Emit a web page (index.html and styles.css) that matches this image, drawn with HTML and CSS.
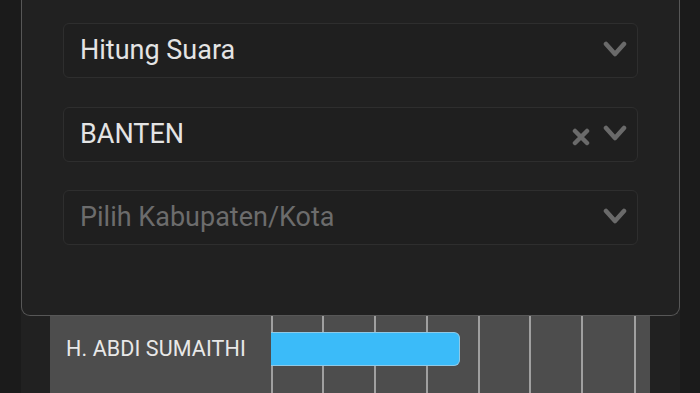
FILE: index.html
```html
<!DOCTYPE html>
<html>
<head>
<meta charset="utf-8">
<link rel="stylesheet" href="styles.css">
</head>
<body>
<div class="page">
  <div class="column">
    <div class="panel">
      <div class="select">
        <span class="value">Hitung Suara</span>
        <span class="icons">
          <svg class="chev" viewBox="0 0 24 17"><path d="M3 3 L12 13 L21 3"/></svg>
        </span>
      </div>
      <div class="select">
        <span class="value">BANTEN</span>
        <span class="icons">
          <svg class="clear" viewBox="0 0 18 18"><path d="M3 3 L15 15 M15 3 L3 15"/></svg>
          <svg class="chev" viewBox="0 0 24 17"><path d="M3 3 L12 13 L21 3"/></svg>
        </span>
      </div>
      <div class="select">
        <span class="value placeholder">Pilih Kabupaten/Kota</span>
        <span class="icons">
          <svg class="chev" viewBox="0 0 24 17"><path d="M3 3 L12 13 L21 3"/></svg>
        </span>
      </div>
    </div>
    <div class="chart">
      <div class="row">
        <div class="label">H. ABDI SUMAITHI</div>
        <div class="plot">
          <div class="grid">
            <span></span><span></span><span></span><span></span><span></span><span></span><span></span><span></span>
          </div>
          <div class="bar" style="width:189px"></div>
        </div>
      </div>
    </div>
  </div>
</div>
</body>
</html>
```

FILE: styles.css
```css
* { box-sizing: border-box; }
html, body {
  margin: 0;
  padding: 0;
  width: 700px;
  height: 393px;
  overflow: hidden;
  background: #1b1b1b;
  font-family: Roboto, "Liberation Sans", sans-serif;
}
.page {
  padding-left: 21px;
  width: 700px;
  height: 393px;
}
.column {
  width: 659px;
  height: 393px;
  background: #212121;
  position: relative;
}
.panel {
  position: relative;
  z-index: 2;
  height: 316px;
  background: #212121;
  border: 1px solid #575757;
  border-top: none;
  border-radius: 0 0 9px 9px;
  padding: 23px 41px 0 41px;
  display: flex;
  flex-direction: column;
  gap: 29px;
}
.select {
  height: 55px;
  border: 1px solid #2e2e2e;
  border-radius: 6px;
  background: #1f1f1f;
  display: flex;
  align-items: center;
  justify-content: space-between;
  padding: 0 10px 0 16px;
}
.select + .select + .select { margin-top: -1px; }
.value {
  font-size: 27px;
  color: #e4e4e4;
  line-height: 1;
}
.value.placeholder { color: #6c6c6c; }
.icons {
  display: flex;
  align-items: center;
  gap: 13px;
}
.icons svg {
  fill: none;
  stroke: #6a6a6a;
  stroke-width: 4.5;
  stroke-linecap: round;
  stroke-linejoin: round;
}
.chev { width: 24px; height: 17px; margin-top: -2px; }
.clear { width: 18px; height: 18px; margin-top: 4px; }
.chart {
  position: absolute;
  left: 29px;
  top: 300px;
  width: 600px;
  height: 93px;
  background: #4d4d4d;
}
.row {
  display: flex;
  height: 93px;
}
.label {
  width: 220px;
  padding-left: 16px;
  padding-top: 36px;
  font-size: 21.5px;
  line-height: 26px;
  color: #e8e8e8;
  letter-spacing: 0.1px;
  white-space: nowrap;
}
.plot {
  position: relative;
  flex: 1;
}
.grid {
  position: absolute;
  inset: 0;
}
.grid span {
  position: absolute;
  top: 0;
  bottom: 0;
  width: 2px;
  background: #a0a0a0;
}
.grid span:nth-child(1) { left: 1px; }
.grid span:nth-child(2) { left: 52px; }
.grid span:nth-child(3) { left: 104px; }
.grid span:nth-child(4) { left: 156px; }
.grid span:nth-child(5) { left: 208px; }
.grid span:nth-child(6) { left: 259px; }
.grid span:nth-child(7) { left: 311px; }
.grid span:nth-child(8) { left: 364px; }
.bar {
  position: relative;
  margin-top: 32px;
  margin-left: 1px;
  height: 34px;
  background: #3bbbf9;
  border: 1px solid #8fc9e6;
  border-left: none;
  border-radius: 0 6px 6px 0;
}
```
